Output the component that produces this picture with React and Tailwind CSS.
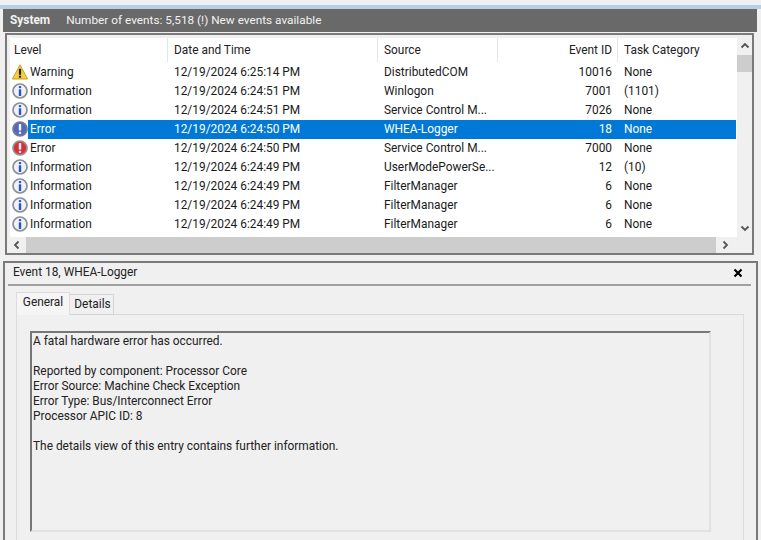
import React from 'react';

const ROWS = [
  { level: 'Warning', date: '12/19/2024 6:25:14 PM', source: 'DistributedCOM', id: '10016', cat: 'None', icon: 'warn' },
  { level: 'Information', date: '12/19/2024 6:24:51 PM', source: 'Winlogon', id: '7001', cat: '(1101)', icon: 'info' },
  { level: 'Information', date: '12/19/2024 6:24:51 PM', source: 'Service Control M...', id: '7026', cat: 'None', icon: 'info' },
  { level: 'Error', date: '12/19/2024 6:24:50 PM', source: 'WHEA-Logger', id: '18', cat: 'None', icon: 'errorSel', selected: true },
  { level: 'Error', date: '12/19/2024 6:24:50 PM', source: 'Service Control M...', id: '7000', cat: 'None', icon: 'error' },
  { level: 'Information', date: '12/19/2024 6:24:49 PM', source: 'UserModePowerSe...', id: '12', cat: '(10)', icon: 'info' },
  { level: 'Information', date: '12/19/2024 6:24:49 PM', source: 'FilterManager', id: '6', cat: 'None', icon: 'info' },
  { level: 'Information', date: '12/19/2024 6:24:49 PM', source: 'FilterManager', id: '6', cat: 'None', icon: 'info' },
  { level: 'Information', date: '12/19/2024 6:24:49 PM', source: 'FilterManager', id: '6', cat: 'None', icon: 'info' },
];

const LevelIcon = ({ type }) => {
  if (type === 'warn') {
    return (
      <svg viewBox="0 0 16 16" className="h-4 w-4 shrink-0">
        <path d="M8 0.8 L15.6 15 H0.4 Z" fill="#f7cf3a" stroke="#c59a14" strokeWidth="0.9" strokeLinejoin="round" />
        <rect x="6.9" y="4.8" width="2.2" height="6" rx="0.6" fill="#1e1e1e" />
        <rect x="6.9" y="11.7" width="2.2" height="2" fill="#1e1e1e" />
      </svg>
    );
  }
  if (type === 'info') {
    return (
      <svg viewBox="0 0 16 16" className="h-4 w-4 shrink-0">
        <circle cx="8" cy="8" r="7" fill="#eef1f8" stroke="#8b8f98" strokeWidth="1.7" />
        <rect x="6.8" y="3" width="2.4" height="2.2" rx="0.8" fill="#2c55b8" />
        <rect x="6.8" y="6.2" width="2.4" height="6.8" rx="0.5" fill="#2c55b8" />
      </svg>
    );
  }
  const sel = type === 'errorSel';
  return (
    <svg viewBox="0 0 16 16" className="h-4 w-4 shrink-0">
      <circle cx="8" cy="8" r="7" fill={sel ? '#5468bd' : '#d8303a'} stroke={sel ? '#777b96' : '#9a9090'} strokeWidth="1.7" />
      <rect x="6.8" y="3" width="2.4" height="6.6" rx="0.5" fill="#f6f6fb" />
      <rect x="6.8" y="10.8" width="2.4" height="2.2" rx="0.8" fill="#f6f6fb" />
    </svg>
  );
};

const Chevron = ({ d, className }) => (
  <svg viewBox="0 0 10 10" className={className}>
    <path d={d} fill="none" stroke="#555" strokeWidth="1.8" />
  </svg>
);

function EventRow({ row }) {
  const textCls = row.selected ? 'text-white' : 'text-[#1a1a1a]';
  return (
    <div className={`mr-[1px] flex h-[19px] items-center leading-[19px] ${textCls}`}>
      <div className="flex w-[158px] shrink-0 items-center">
        <span className="ml-[2px] mb-[2px]"><LevelIcon type={row.icon} /></span>
        <span className={`flex h-[19px] flex-1 items-center pl-[2px] ${row.selected ? 'bg-[#0078d7]' : ''}`}>{row.level}</span>
      </div>
      <div className={`flex h-[19px] flex-1 items-center ${row.selected ? 'bg-[#0078d7]' : ''}`}>
        <span className="w-[210px] shrink-0 pl-[6px]">{row.date}</span>
        <span className="w-[120px] shrink-0 pl-[6px]">{row.source}</span>
        <span className="w-[120px] shrink-0 pr-[6px] text-right">{row.id}</span>
        <span className="pl-[6px]">{row.cat}</span>
      </div>
    </div>
  );
}

export default function App() {
  return (
    <div className="flex h-[540px] w-[761px] flex-col overflow-hidden bg-[#f0f0f0] font-['Roboto','Noto_Sans',sans-serif] text-[11.9px]">
      <div className="h-[5px] shrink-0 bg-[#eef1f4]" />
      <div className="h-[4px] shrink-0 bg-[#b9cfe6]" />

      <div className="ml-[3px] mr-[4px] flex h-[23px] shrink-0 items-center bg-[#696969] pl-[7px] pt-[1px] text-[#f2f2f2]">
        <span className="font-bold">System</span>
        <span className="ml-[16px] text-[11.8px]">Number of events: 5,518 (!) New events available</span>
      </div>

      {/* event list */}
      <div className="ml-[5px] mr-[7px] mt-[1px] flex h-[222px] shrink-0 flex-col border-2 border-[#7a7a7a] bg-[#f0f0f0] pl-[3px] pt-[3px]">
        <div className="flex min-h-0 flex-1">
          <div className="flex w-[727px] flex-col bg-white">
            <div className="flex h-[24px] shrink-0 items-center text-[#222]">
              <span className="w-[158px] border-r border-[#e5e5e5] pl-[4px] leading-[24px]">Level</span>
              <span className="w-[210px] border-r border-[#e5e5e5] pl-[6px] leading-[24px]">Date and Time</span>
              <span className="w-[120px] border-r border-[#e5e5e5] pl-[6px] leading-[24px]">Source</span>
              <span className="w-[120px] border-r border-[#e5e5e5] pr-[5px] text-right leading-[24px]">Event ID</span>
              <span className="pl-[6px] leading-[24px]">Task Category</span>
            </div>
            <div className="min-h-0 flex-1 overflow-hidden pt-[1px]">
              {ROWS.map((row, i) => <EventRow key={i} row={row} />)}
            </div>
          </div>
          <div className="flex w-[15px] shrink-0 flex-col items-center bg-[#f0f0f0]">
            <Chevron d="M1.5 6.5 L5 3 L8.5 6.5" className="mt-[3px] h-[10px] w-[10px]" />
            <div className="mt-[4px] h-[17px] w-full bg-[#cdcdcd]" />
            <div className="flex-1" />
            <Chevron d="M1.5 3.5 L5 7 L8.5 3.5" className="mb-[4px] h-[10px] w-[10px]" />
          </div>
        </div>
        <div className="flex h-[16px] shrink-0 items-center">
          <Chevron d="M6.5 1.5 L3 5 L6.5 8.5" className="ml-[2px] h-[10px] w-[10px] shrink-0" />
          <div className="ml-[4px] h-full w-[690px] bg-[#cdcdcd]" />
          <Chevron d="M3.5 1.5 L7 5 L3.5 8.5" className="ml-[4px] h-[10px] w-[10px] shrink-0" />
        </div>
      </div>

      {/* event details */}
      <div className="mx-[3px] mt-[6px] flex min-h-0 flex-1 flex-col border-x-2 border-t-2 border-[#7a7a7a] bg-[#f0f0f0] pl-[3px]">
        <div className="mr-[5px] flex h-[23px] shrink-0 items-center justify-between border-b-2 border-[#a0a0a0] pb-[2px] text-[#222]">
          <span className="ml-[5px]">Event 18, WHEA-Logger</span>
          <svg viewBox="0 0 10 10" className="mr-[8px] mt-[1px] h-[10px] w-[10px]">
            <path d="M1.5 1.5 L8.5 8.5 M8.5 1.5 L1.5 8.5" stroke="#000" strokeWidth="2.2" />
          </svg>
        </div>
        <div className="ml-[8px] mr-[12px] mt-[6px] flex h-[23px] shrink-0 items-end text-[#222]">
          <div className="flex h-[23px] w-[54px] items-center justify-center border border-b-0 border-[#dcdcdc] bg-[#f5f5f5] pb-[2px]">General</div>
          <div className="flex h-[21px] w-[44px] items-center justify-center border border-l-0 border-[#d4d4d4] bg-[#f0f0f0] pl-[2px]">Details</div>
          <div className="h-[1px] flex-1 bg-[#d9d9d9]" />
        </div>
        <div className="ml-[8px] mr-[12px] min-h-0 flex-1 border-x border-[#dcdcdc] pl-[13px] pt-[16px]">
          <div className="h-[201px] w-[681px] border-l-2 border-t-2 border-[#777] border-b-2 border-b-[#e2e2e2] border-r-2 border-r-[#e2e2e2] pl-[1px] pt-[1px] leading-[15px] text-[#222]">
            <p>A fatal hardware error has occurred.</p>
            <p className="mt-[15px]">Reported by component: Processor Core</p>
            <p>Error Source: Machine Check Exception</p>
            <p>Error Type: Bus/Interconnect Error</p>
            <p>Processor APIC ID: 8</p>
            <p className="mt-[15px]">The details view of this entry contains further information.</p>
          </div>
        </div>
      </div>
    </div>
  );
}
